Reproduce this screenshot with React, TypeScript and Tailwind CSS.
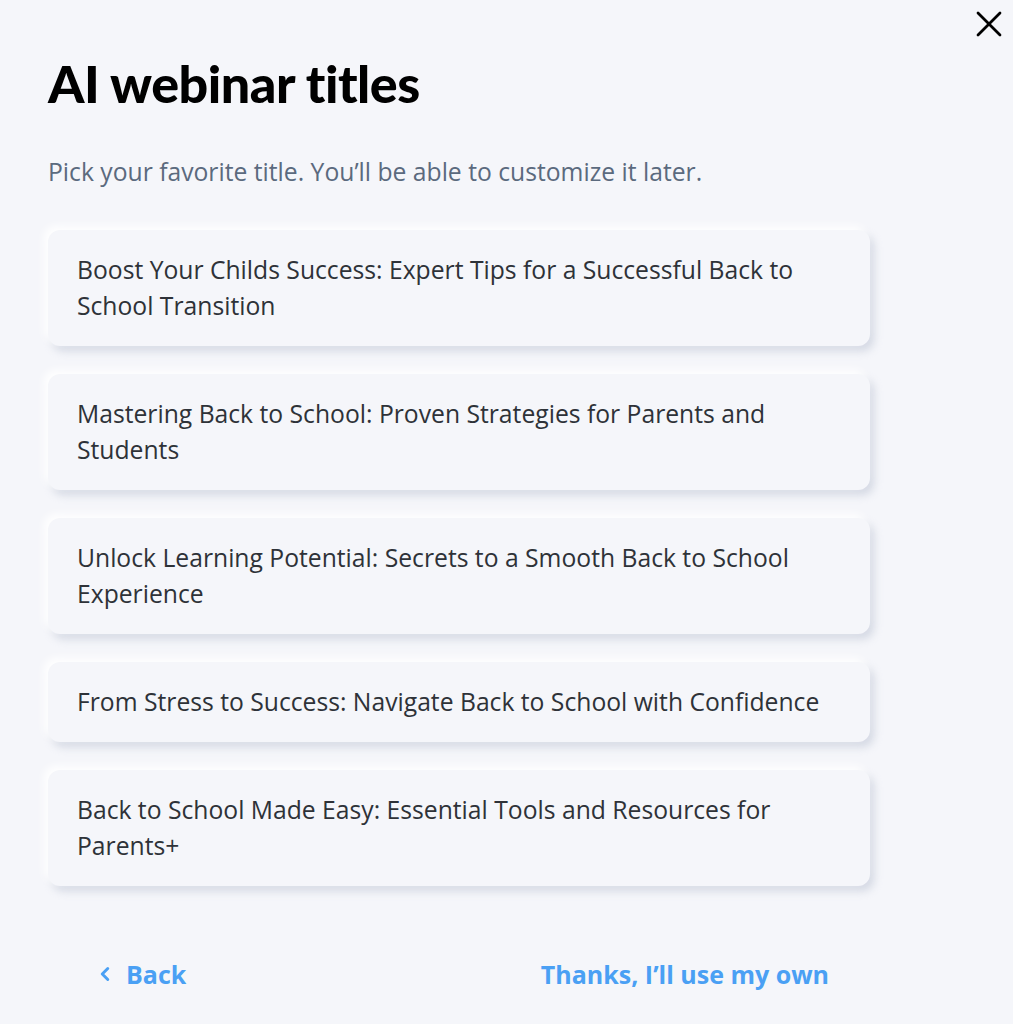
import { X, ChevronLeft } from "lucide-react"

const titles = [
  "Boost Your Childs Success: Expert Tips for a Successful Back to School Transition",
  "Mastering Back to School: Proven Strategies for Parents and Students",
  "Unlock Learning Potential: Secrets to a Smooth Back to School Experience",
  "From Stress to Success: Navigate Back to School with Confidence",
  "Back to School Made Easy: Essential Tools and Resources for Parents+",
]

export default function App() {
  return (
    <div className="relative min-h-[1024px] w-full bg-[#f5f6fa] font-['Open_Sans',sans-serif]">
      {/* Close button */}
      <button className="absolute left-[967px] top-[2px] flex h-[44px] w-[44px] items-center justify-center text-black" aria-label="Close">
        <X size={44} strokeWidth={1.5} />
      </button>

      <div className="flex w-[870px] flex-col pl-[48px] pt-[52px]">
        <h1 className="font-['Lato',sans-serif] text-[52px] font-black leading-[62px] tracking-[-0.5px] text-black">AI webinar titles</h1>

        <p className="mt-[40px] text-[24.7px] leading-[36px] text-[#5b6a7e]">
          Pick your favorite title. You’ll be able to customize it later.
        </p>

        <div className="mt-[40px] flex flex-col gap-[28px]">
          {titles.map((title) => (
            <button
              key={title}
              className="rounded-[12px] bg-[#f5f6fa] px-[29px] py-[22px] text-left text-[24.7px] leading-[36px] text-[#2e3238] shadow-[-4px_-4px_8px_#ffffff,4px_5px_8px_rgba(170,180,200,0.45)]"
            >
              {title}
            </button>
          ))}
        </div>

        <div className="mt-[72px] flex items-center justify-between pl-[46px] pr-[41px]">
          <button className="flex items-center gap-[10px] text-[25px] font-bold leading-[32px] text-[#4aa0f4]">
            <ChevronLeft size={22} strokeWidth={3.2} />
            Back
          </button>
          <button className="text-[25px] font-bold leading-[32px] text-[#4aa0f4]">Thanks, I’ll use my own</button>
        </div>
      </div>
    </div>
  )
}
